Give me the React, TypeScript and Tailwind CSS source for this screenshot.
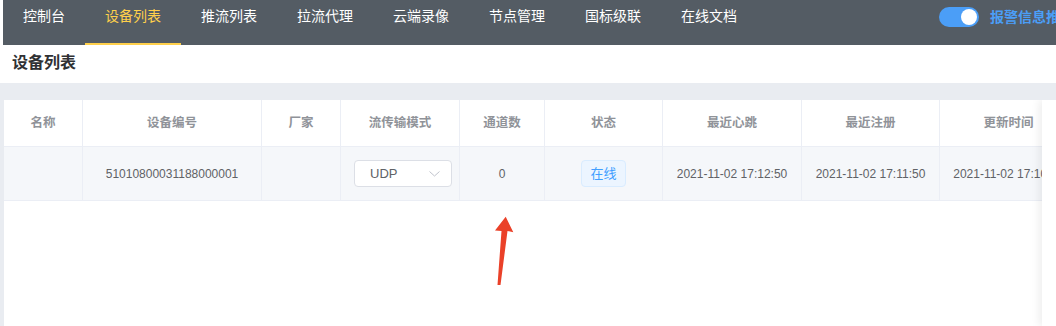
import React from 'react';

const navItems = ['控制台', '设备列表', '推流列表', '拉流代理', '云端录像', '节点管理', '国标级联', '在线文档'];

const columns = [
    { label: '名称', width: 'w-[79px]' },
    { label: '设备编号', width: 'w-[179px]' },
    { label: '厂家', width: 'w-[79px]' },
    { label: '流传输模式', width: 'w-[119px]' },
    { label: '通道数', width: 'w-[85px]' },
    { label: '状态', width: 'w-[118px]' },
    { label: '最近心跳', width: 'w-[139px]' },
    { label: '最近注册', width: 'w-[138px]' },
    { label: '更新时间', width: 'w-[138px]' },
];

const TopNav: React.FC = () => (
    <div className="flex h-[45px] bg-white pl-[3px]">
        <div className="flex flex-1 items-stretch overflow-hidden bg-[#545c64]">
            {navItems.map((item, i) => (
                <div
                    key={item}
                    className={`shrink-0 whitespace-nowrap border-b-2 px-5 text-[14px] leading-[32px] ${i === 1 ? 'border-[#ffd04b] text-[#ffd04b]' : 'border-transparent text-white'}`}
                >
                    {item}
                </div>
            ))}
            <div className="ml-[182px] mt-[7px] flex h-[20px] w-[40px] shrink-0 items-center justify-end rounded-full bg-[#4b9ef7] pr-[2px]">
                <div className="h-[16px] w-[16px] rounded-full bg-white" />
            </div>
            <div className="ml-[11px] shrink-0 whitespace-nowrap text-[14px] font-bold leading-[34px] text-[#4b9ef7]">报警信息推送</div>
        </div>
    </div>
);

const DeviceTable: React.FC = () => {
    const cell = 'flex shrink-0 items-center justify-center border-r border-[#ebeef5]';
    return (
        <div className="relative h-[226px] overflow-hidden bg-white">
            <div className="flex h-[47px] border-b border-[#ebeef5] text-[12.5px] font-bold text-[#909399]">
                {columns.map(c => (
                    <div key={c.label} className={`${cell} ${c.width}`}>{c.label}</div>
                ))}
            </div>
            <div className="flex h-[54px] border-b border-[#ebeef5] bg-[#f5f7fa] text-[12px] text-[#606266]">
                <div className={`${cell} ${columns[0].width}`} />
                <div className={`${cell} ${columns[1].width}`}>51010800031188000001</div>
                <div className={`${cell} ${columns[2].width}`} />
                <div className={`${cell} ${columns[3].width} !justify-start pl-[13px]`}>
                    <div className="flex h-[27px] w-[98px] items-center justify-between rounded-[4px] border border-[#dcdfe6] bg-white pl-[15px] pr-[11px] text-[13px]">
                        <span>UDP</span>
                        <svg width="11" height="6" viewBox="0 0 11 6" fill="none">
                            <path d="M0.5 0.5L5.5 5L10.5 0.5" stroke="#c0c4cc" strokeWidth="1" />
                        </svg>
                    </div>
                </div>
                <div className={`${cell} ${columns[4].width}`}>0</div>
                <div className={`${cell} ${columns[5].width}`}>
                    <div className="flex h-[27px] w-[45px] items-center justify-center rounded-[4px] border border-[#d9ecff] bg-[#ecf5ff] text-[13px] text-[#409eff]">在线</div>
                </div>
                <div className={`${cell} ${columns[6].width}`}>2021-11-02 17:12:50</div>
                <div className={`${cell} ${columns[7].width}`}>2021-11-02 17:11:50</div>
                <div className={`${cell} ${columns[8].width}`}>2021-11-02 17:10:50</div>
            </div>
            {/* fixed right column */}
            <div className="absolute bottom-0 right-0 top-0 w-[14px] bg-white shadow-[-3px_0_8px_rgba(0,0,0,0.07)]" />
        </div>
    );
};

export default function App() {
    return (
        <div className="relative h-[326px] w-[1056px] overflow-hidden bg-white font-['Liberation_Sans','Noto_Sans_CJK_SC',sans-serif]">
            <TopNav />
            <div className="flex h-[38px] items-center bg-white pb-[3px] pl-[12px] text-[16px] font-bold text-[#303133]">设备列表</div>
            <div className="bg-[#e9ecf1] pl-[4px] pt-[17px]">
                <DeviceTable />
            </div>
            {/* annotation arrow */}
            <svg className="absolute left-[490px] top-[210px]" width="30" height="80" viewBox="0 0 30 80">
                <polygon points="15.7,6.7 23.3,22.3 17.5,21 10.5,75 7.5,75 11.5,21 5,20.5" fill="#ea4129" />
            </svg>
        </div>
    );
}
